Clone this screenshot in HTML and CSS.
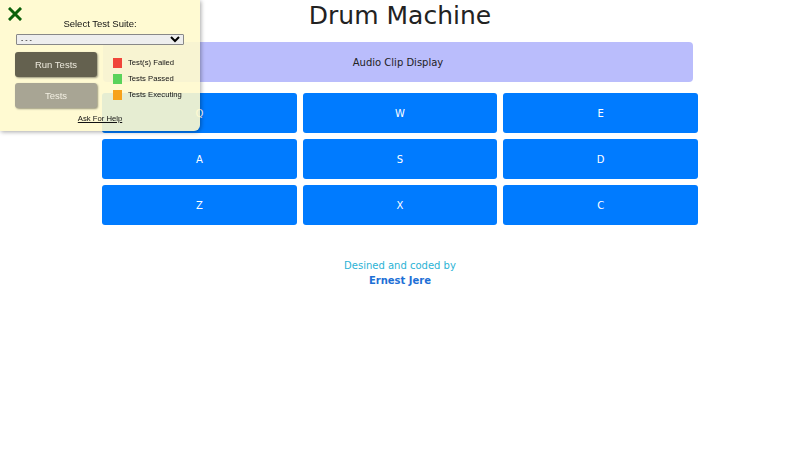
FILE: index.html
```html
<!DOCTYPE html>
<html lang="en">
<head>
    <meta charset="UTF-8">
    <meta name="viewport" content="width=device-width, initial-scale=1.0">
    <title>Drum Machine</title>
    <link rel="stylesheet" href="styles.css">
</head>
<body>
    <div id="drum-machine" class="drum-machine">
        <h1 class="title">Drum Machine</h1>
        <div id="display" class="display">Audio Clip Display</div>

        <div class="pads">
            <button class="drum-pad">Q</button>
            <button class="drum-pad">W</button>
            <button class="drum-pad">E</button>
            <button class="drum-pad">A</button>
            <button class="drum-pad">S</button>
            <button class="drum-pad">D</button>
            <button class="drum-pad">Z</button>
            <button class="drum-pad">X</button>
            <button class="drum-pad">C</button>
        </div>

        <div class="credits">
            <p class="credits-line">Desined and coded by</p>
            <p class="credits-name">Ernest Jere</p>
        </div>
    </div>

    <!-- test suite panel -->
    <div class="test-panel">
        <div class="test-close">
            <svg width="14" height="14" viewBox="0 0 14 14">
                <path d="M2 2 L12 12 M12 2 L2 12" stroke="#0b610b" stroke-width="3" stroke-linecap="square"/>
            </svg>
        </div>
        <div class="test-label">Select Test Suite:</div>
        <select class="test-select">
            <option>- - -</option>
        </select>
        <div class="test-body">
            <div class="test-buttons">
                <button class="test-btn run">Run Tests</button>
                <button class="test-btn tests">Tests</button>
            </div>
            <div class="legend">
                <div class="legend-item"><span class="swatch red"></span>Test(s) Failed</div>
                <div class="legend-item"><span class="swatch green"></span>Tests Passed</div>
                <div class="legend-item"><span class="swatch orange"></span>Tests Executing</div>
            </div>
        </div>
        <a class="test-help" href="#">Ask For Help</a>
    </div>
</body>
</html>
```

FILE: styles.css
```css
* {
    margin: 0;
    padding: 0;
    box-sizing: border-box;
}

body {
    font-family: 'DejaVu Sans', Verdana, sans-serif;
    background: #fff;
    color: #212529;
}

.drum-machine {
    width: 596px;
    margin: 0 auto;
}

.title {
    font-size: 25px;
    font-weight: 400;
    text-align: center;
    line-height: 30px;
    padding-top: 1px;
    color: #222;
}

.display {
    margin: 11px 5px 0 1px;
    height: 40px;
    background: #babdfc;
    border-radius: 4px;
    display: flex;
    align-items: center;
    justify-content: center;
    font-size: 10px;
    color: #222;
}

.pads {
    display: grid;
    grid-template-columns: 1fr 1fr 1fr;
    gap: 6px;
    margin-top: 11px;
}

.drum-pad {
    height: 40px;
    background: #007bff;
    color: #fff;
    border: none;
    border-radius: 3px;
    font-family: 'DejaVu Sans', sans-serif;
    font-size: 10px;
}

.credits {
    margin-top: 33px;
    text-align: center;
    font-size: 10px;
    line-height: 15px;
}

.credits-line {
    color: #2bb3d5;
}

.credits-name {
    color: #1d6fd6;
    font-weight: bold;
}

/* test suite panel */
.test-panel {
    position: fixed;
    top: 0;
    left: 0;
    width: 200px;
    height: 131px;
    background: rgba(255, 250, 205, 0.9);
    border-radius: 0 0 6px 0;
    box-shadow: 1px 1px 4px rgba(0, 0, 0, 0.35);
    font-family: 'Liberation Sans', Arial, sans-serif;
    color: #111;
}

.test-close {
    position: absolute;
    top: 7px;
    left: 8px;
    line-height: 0;
}

.test-label {
    text-align: center;
    font-size: 9.5px;
    padding-top: 17px;
    line-height: 13px;
}

.test-select {
    display: block;
    width: 168px;
    height: 11px;
    margin: 4px 0 0 16px;
    font-size: 7px;
    background: #eee;
    border: 1px solid #888;
    border-radius: 1px;
    font-family: 'Liberation Sans', sans-serif;
}

.test-body {
    display: flex;
    margin-top: 7px;
    padding-left: 15px;
}

.test-buttons {
    display: flex;
    flex-direction: column;
    gap: 6px;
}

.test-btn {
    width: 82px;
    height: 25px;
    border: none;
    border-radius: 3px;
    font-family: 'Liberation Sans', sans-serif;
    font-size: 9.5px;
    box-shadow: 1px 1px 2px rgba(0, 0, 0, 0.4);
}

.test-btn.run {
    background: #64614f;
    color: #ece9dc;
}

.test-btn.tests {
    background: #a8a594;
    color: #f2efe2;
}

.legend {
    display: flex;
    flex-direction: column;
    gap: 5px;
    padding: 5px 0 0 16px;
}

.legend-item {
    display: flex;
    align-items: center;
    font-size: 7.7px;
    line-height: 11px;
}

.swatch {
    width: 9px;
    height: 10px;
    margin-right: 6px;
}

.swatch.red { background: #f0453a; }
.swatch.green { background: #5ad35a; }
.swatch.orange { background: #f7a21b; }

.test-help {
    display: block;
    text-align: center;
    font-size: 7.7px;
    color: #111;
    margin-top: 6px;
}
```
